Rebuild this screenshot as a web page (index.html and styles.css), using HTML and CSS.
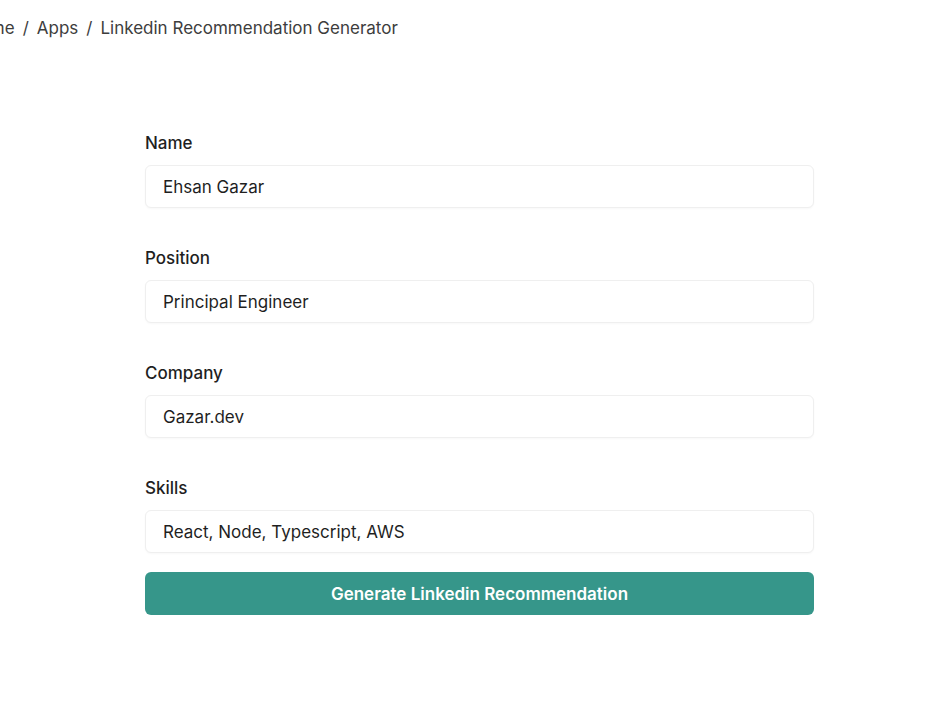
FILE: index.html
```html
<!DOCTYPE html>
<html lang="en">
<head>
   <meta charset="UTF-8">
   <meta name="viewport" content="width=device-width, initial-scale=1.0">
   <title>Linkedin Recommendation Generator</title>
   <link rel="stylesheet" href="styles.css">
</head>
<body>
   <nav class="breadcrumb">
       <a href="#">Home</a>
       <span class="sep">/</span>
       <a href="#">Apps</a>
       <span class="sep">/</span>
       <span>Linkedin Recommendation Generator</span>
   </nav>
   <form class="rec-form">
       <div class="field">
           <label for="name">Name</label>
           <input type="text" id="name" value="Ehsan Gazar">
       </div>
       <div class="field">
           <label for="position">Position</label>
           <input type="text" id="position" value="Principal Engineer">
       </div>
       <div class="field">
           <label for="company">Company</label>
           <input type="text" id="company" value="Gazar.dev">
       </div>
       <div class="field last">
           <label for="skills">Skills</label>
           <input type="text" id="skills" value="React, Node, Typescript, AWS">
       </div>
       <button type="submit">Generate Linkedin Recommendation</button>
   </form>
</body>
</html>
```

FILE: styles.css
```css
body {
    font-family: Inter, "Noto Sans", sans-serif;
    background-color: #fff;
    color: #1f1f1f;
    margin: 0;
    padding: 0;
}
.breadcrumb {
    display: flex;
    align-items: center;
    gap: 8px;
    margin-left: -33px;
    padding-top: 17px;
    height: 22px;
    font-size: 17px;
    color: #3d3d3d;
    white-space: nowrap;
}
.breadcrumb a {
    color: #3d3d3d;
    text-decoration: none;
}
.rec-form {
    width: 669px;
    margin: 94px 0 0 145px;
    display: flex;
    flex-direction: column;
}
.field {
    display: flex;
    flex-direction: column;
    margin-bottom: 40px;
}
.field.last {
    margin-bottom: 19px;
}
.field label {
    font-size: 17px;
    font-weight: 500;
    line-height: 20px;
    margin-bottom: 12px;
}
.field input {
    height: 43px;
    padding: 0 17px;
    border: 1px solid #efefef;
    border-radius: 6px;
    box-sizing: border-box;
    font-family: inherit;
    font-size: 17px;
    color: #1f1f1f;
    box-shadow: 0 1px 2px rgba(0, 0, 0, 0.03);
}
.rec-form button {
    height: 43px;
    border: none;
    border-radius: 6px;
    background-color: #36968a;
    color: #fff;
    font-family: inherit;
    font-size: 17px;
    font-weight: 600;
    cursor: pointer;
}
```
